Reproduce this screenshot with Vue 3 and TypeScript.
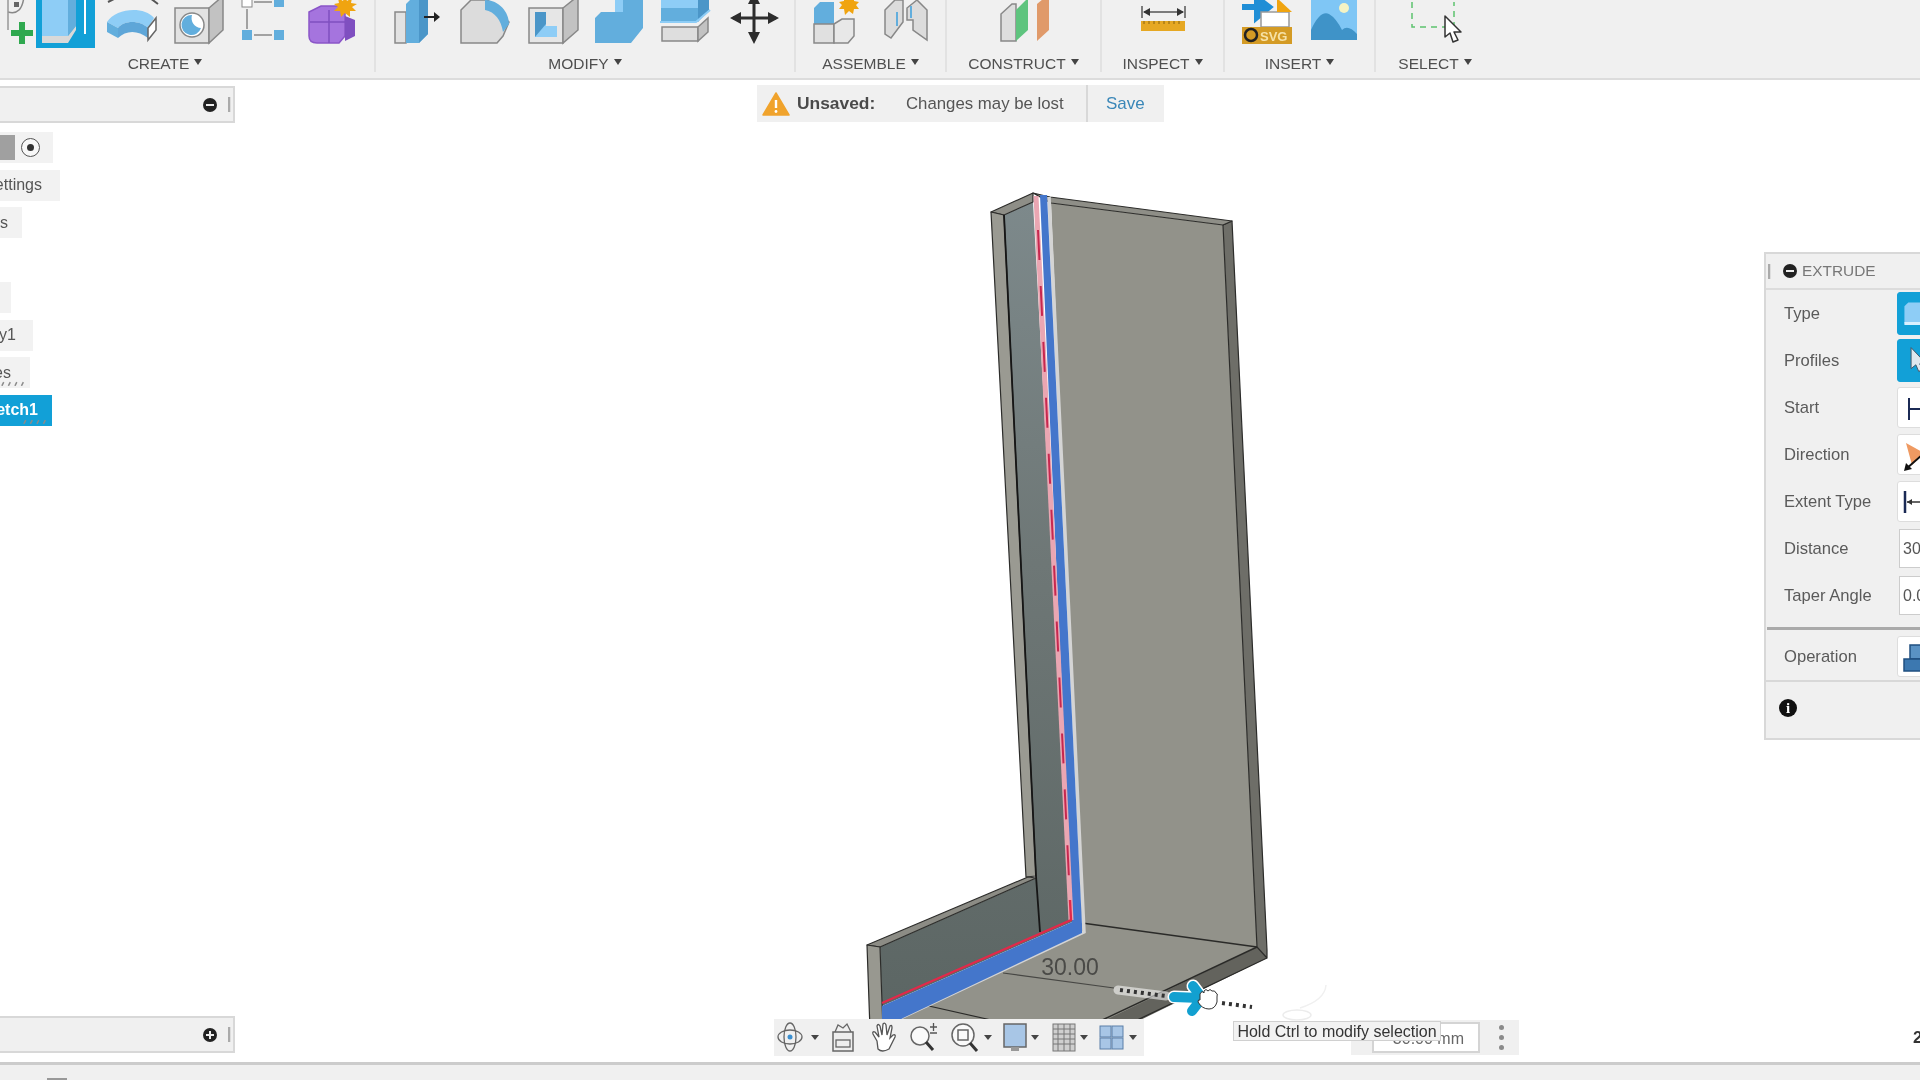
<script setup lang="ts">
// Fusion-style modelling workspace, extrude command open
interface TreeRow {
  label: string
  width: number
  pad: number
  active?: boolean
  blank?: boolean
  hatch?: boolean
}

const treeRows: TreeRow[] = [
  { label: 'Document Settings', width: 60, pad: 18 },
  { label: 'Named Views', width: 22, pad: 14 },
  { label: '', width: 0, pad: 0, blank: true },
  { label: '', width: 11, pad: 0 },
  { label: 'Body1', width: 33, pad: 17 },
  { label: 'Sketches', width: 30, pad: 19, hatch: true },
  { label: 'Sketch1', width: 52, pad: 14, active: true, hatch: true },
]

const extrudeRows = ['Type', 'Profiles', 'Start', 'Direction', 'Extent Type', 'Distance', 'Taper Angle']
</script>

<template>
  <div class="app">
    <header class="toolbar">
      <section class="group group-create">
        <div class="icons">
          <svg class="tool" viewBox="0 0 67 46">
            <path d="M44 12 Q58 16 60 -4" fill="none" stroke="#888" stroke-width="1.5" />
            <path d="M44 -2 L44 30" fill="none" stroke="#999" stroke-width="1.5" />
            <rect x="50" y="2" width="5" height="5" fill="#666" />
            <path d="M58 22 V44 M47 33 H69" stroke="#2fa84f" stroke-width="6" />
          </svg>
          <svg class="tool" viewBox="0 0 67 46">
            <rect x="5" y="0" width="59" height="48" fill="#12a0d7" />
            <path d="M11 0 H37 V36 H11 Z" fill="#8ecdf6" />
            <path d="M37 0 H45 V26 L37 36 Z" fill="#62aedd" />
            <path d="M11 36 H37 L45 26 V30 L37 43 H11 Z" fill="#d9d9d9" />
            <path d="M54 -2 V34" stroke="#fff" stroke-width="2" />
          </svg>
          <svg class="tool" viewBox="0 0 67 46">
            <path d="M9 22 C18 8 46 6 56 18 L50 28 C42 20 26 20 20 28 Z" fill="#8ecdf6" />
            <path d="M9 22 L20 28 V38 L9 32 Z" fill="#62aedd" />
            <path d="M20 28 C26 20 42 20 50 28 V38 C40 30 28 30 20 38 Z" fill="#5ea6d8" />
            <path d="M50 28 L58 18 V30 L50 40 Z" fill="#fff" stroke="#666" stroke-width="1.5" />
            <path d="M10 2 L18 -2 M52 -2 L60 4" stroke="#555" stroke-width="2" />
          </svg>
          <svg class="tool" viewBox="0 0 67 46">
            <path d="M10 8 H44 V43 H10 Z" fill="#e2e2e2" stroke="#888" stroke-width="1.5" />
            <path d="M44 8 L58 -4 V30 L44 43 Z" fill="#c2c2c2" stroke="#888" stroke-width="1.5" />
            <circle cx="27" cy="25" r="12" fill="#fff" stroke="#888" stroke-width="1.5" />
            <path d="M27 15 A10 10 0 1 0 36 28 A10 10 0 0 1 27 15 Z" fill="#62aedd" />
          </svg>
          <svg class="tool" viewBox="0 0 67 46">
            <rect x="10" y="-3" width="10" height="10" fill="#fff" stroke="#888" />
            <rect x="42" y="-3" width="10" height="10" fill="#62aedd" />
            <rect x="10" y="30" width="10" height="10" fill="#62aedd" />
            <rect x="42" y="30" width="10" height="10" fill="#62aedd" />
            <path d="M15 9 V29 M22 2 H40 M22 35 H40" stroke="#888" stroke-width="1.5" />
          </svg>
          <svg class="tool" viewBox="0 0 67 46">
            <path d="M10 12 L22 6 H46 V36 L40 43 H18 Q10 43 10 36 Z" fill="#a574de" stroke="#8a55c8" stroke-width="1.5" />
            <path d="M46 16 L56 20 V36 L46 41 Z" fill="#7f4fc0" />
            <path d="M11 22 H46 M30 10 V43" stroke="#7f4fc0" stroke-width="1.5" />
            <path d="M46 -4 L48 1 L53 -2 L52 3 L58 4 L53 7 L57 11 L51 11 L51 17 L46 13 L42 17 L41 11 L35 11 L39 7 L35 4 L40 3 L39 -2 L44 1 Z" fill="#f0a410" />
          </svg>
        </div>
        <div class="group-label">CREATE<i class="caret"></i></div>
      </section>

      <section class="group group-modify">
        <div class="icons">
          <svg class="tool" viewBox="0 0 67 46">
            <path d="M11 12 H22 V43 H11 Z" fill="#e2e2e2" stroke="#888" stroke-width="1.5" />
            <path d="M22 4 L30 -4 H44 V34 L35 43 H22 Z" fill="#62aedd" />
            <path d="M35 -4 V43 L44 34 V-4 Z" fill="#4b96c8" />
            <path d="M40 17 H54" stroke="#222" stroke-width="2" />
            <path d="M50 12 L56 17 L50 22 Z" fill="#222" />
          </svg>
          <svg class="tool" viewBox="0 0 67 46">
            <path d="M10 10 L20 0 H36 C48 6 52 18 58 22 L52 36 L46 43 H10 Z" fill="#dcdcdc" stroke="#888" stroke-width="1.5" />
            <path d="M34 0 C48 0 58 12 58 24 L52 32 C50 20 44 12 34 10 Z" fill="#62aedd" />
          </svg>
          <svg class="tool" viewBox="0 0 67 46">
            <path d="M11 8 H45 V43 H11 Z" fill="#e6e6e6" stroke="#888" stroke-width="1.5" />
            <path d="M45 8 L60 -4 V30 L45 43 Z" fill="#c2c2c2" stroke="#888" stroke-width="1.5" />
            <path d="M17 12 H28 V26 H39 V37 H17 Z" fill="#8ecdf6" />
            <path d="M17 12 H28 V24 L17 37 Z" fill="#4b96c8" />
          </svg>
          <svg class="tool" viewBox="0 0 67 46">
            <path d="M10 18 L16 12 H30 V-4 H58 V28 L46 43 H10 Z" fill="#62aedd" />
            <path d="M30 -4 L38 -4 V12 H30 Z" fill="#8ecdf6" />
          </svg>
          <svg class="tool" viewBox="0 0 67 46">
            <path d="M9 8 H46 V22 H9 Z" fill="#62aedd" />
            <path d="M46 -2 L57 -4 V10 L46 22 Z" fill="#4b96c8" />
            <path d="M9 -2 H46 V8 H9 Z" fill="#8ecdf6" />
            <path d="M8 22 H44 L58 10" fill="none" stroke="#8ecdf6" stroke-width="2" />
            <path d="M10 27 H46 V41 H10 Z" fill="#dedede" stroke="#888" stroke-width="1.5" />
            <path d="M46 27 L56 18 V32 L46 41 Z" fill="#c2c2c2" stroke="#888" stroke-width="1.5" />
          </svg>
          <svg class="tool" viewBox="0 0 67 46">
            <path d="M35 -2 V40 M14 18 H57" stroke="#2d2d2d" stroke-width="3" />
            <path d="M35 44 L29 32 H41 Z M35 -8 L29 4 H41 Z M11 18 L22 12 V24 Z M60 18 L49 12 V24 Z" fill="#2d2d2d" />
          </svg>
        </div>
        <div class="group-label">MODIFY<i class="caret"></i></div>
      </section>

      <section class="group group-assemble">
        <div class="icons">
          <svg class="tool" viewBox="0 0 67 46">
            <path d="M10 8 L16 2 H30 V24 H10 Z" fill="#62aedd" />
            <path d="M10 24 H30 V43 H10 Z" fill="#e0e0e0" stroke="#888" stroke-width="1.5" />
            <path d="M30 24 L38 19 H50 V36 L44 43 H30 Z" fill="#e8e8e8" stroke="#888" stroke-width="1.5" />
            <path d="M44 -3 L46 0 L50 -3 L50 1 L55 2 L52 5 L55 9 L50 9 L49 14 L45 11 L41 15 L40 9 L35 9 L38 5 L35 2 L40 1 L40 -3 Z" fill="#f0a410" />
          </svg>
          <svg class="tool" viewBox="0 0 67 46">
            <path d="M14 10 L24 0 H32 V22 L20 38 L14 34 Z" fill="#dcdcdc" stroke="#888" stroke-width="1.5" />
            <path d="M46 0 L56 10 V40 L42 30 V20 H36 V8 Z" fill="#dcdcdc" stroke="#888" stroke-width="1.5" />
            <path d="M26 12 V26 M40 6 V18" stroke="#62aedd" stroke-width="2" />
          </svg>
        </div>
        <div class="group-label">ASSEMBLE<i class="caret"></i></div>
      </section>

      <section class="group group-construct">
        <div class="icons">
          <svg class="tool" viewBox="0 0 67 46">
            <path d="M11 14 L22 4 H26 V41 H11 Z" fill="#dedede" stroke="#888" stroke-width="1.5" />
            <path d="M26 10 L38 -2 V30 L26 41 Z" fill="#5ec47e" />
            <path d="M47 4 L59 -6 V30 L47 41 Z" fill="#e09a6a" />
          </svg>
        </div>
        <div class="group-label">CONSTRUCT<i class="caret"></i></div>
      </section>

      <section class="group group-inspect">
        <div class="icons">
          <svg class="tool" viewBox="0 0 67 46">
            <path d="M13 6 V18 M56 6 V18" stroke="#555" stroke-width="1.5" />
            <path d="M15 12 H54" stroke="#555" stroke-width="1.5" />
            <path d="M14 12 L21 8 V16 Z M55 12 L48 8 V16 Z" fill="#333" />
            <rect x="12" y="21" width="44" height="10" fill="#e6a823" />
            <path d="M15 21 V24 M20 21 V24 M25 21 V24 M30 21 V24 M35 21 V24 M40 21 V24 M45 21 V24 M50 21 V24" stroke="#8a6510" />
          </svg>
        </div>
        <div class="group-label">INSPECT<i class="caret"></i></div>
      </section>

      <section class="group group-insert">
        <div class="icons">
          <svg class="tool" viewBox="0 0 67 46">
            <path d="M9 7 H24 M24 -2 L36 7 L24 17 Z" stroke="#1f8ed6" stroke-width="6" fill="#1f8ed6" />
            <path d="M28 12 H56 V27 H28 Z" fill="#fff" stroke="#999" stroke-width="1.5" />
            <path d="M44 -2 L59 12 H44 Z" fill="#f0a410" />
            <rect x="9" y="27" width="50" height="17" fill="#d49b25" />
            <circle cx="18" cy="35" r="6" fill="none" stroke="#222" stroke-width="2.5" />
            <text x="27" y="41" class="svg-badge">SVG</text>
          </svg>
          <svg class="tool" viewBox="0 0 67 46">
            <rect x="11" y="-4" width="46" height="44" fill="#7fc6f5" />
            <path d="M11 30 Q20 10 29 14 Q36 18 42 30 Q48 24 57 34 V40 H11 Z" fill="#3f93c8" />
            <circle cx="44" cy="8" r="5" fill="#f4f3c4" />
          </svg>
        </div>
        <div class="group-label">INSERT<i class="caret"></i></div>
      </section>

      <section class="group group-select">
        <div class="icons">
          <svg class="tool" viewBox="0 0 67 46">
            <path d="M10 2 V27 H52 V2" fill="none" stroke="#5cc26e" stroke-width="1.5" stroke-dasharray="6 5" />
            <path d="M43 16 L43 37 L48 33 L51 42 L56 40 L52 32 L59 32 Z" fill="#fff" stroke="#333" stroke-width="1.5" stroke-linejoin="round" />
          </svg>
        </div>
        <div class="group-label">SELECT<i class="caret"></i></div>
      </section>
    </header>

    <main class="workspace">
      <!-- model, in page coordinates -->
      <svg class="model" viewBox="0 80 1920 982">
        <defs>
          <linearGradient id="inner" x1="0" y1="0" x2="0" y2="1">
            <stop offset="0" stop-color="#7d898b" />
            <stop offset="0.45" stop-color="#6e7776" />
            <stop offset="1" stop-color="#5c6664" />
          </linearGradient>
        </defs>
        <!-- ghost of the sketch behind the tooltip -->
        <ellipse cx="1297" cy="1015" rx="14" ry="5" fill="none" stroke="#ececec" stroke-width="1.5" />
        <path d="M1300 1008 Q1325 1000 1326 985" fill="none" stroke="#f0f0f0" stroke-width="1.5" />

        <polygon points="1004,215 1033,202 1072,922 882,1006 880,947 1036,878" fill="url(#inner)" />
        <polygon points="1051,203 1223,225 1257,947 1082,923" fill="#92928a" />
        <polygon points="1082,923 1257,947 1098,1030 880,1030" fill="#92928a" />
        <polygon points="1257,947 1267,958 1120,1030 1085,1030" fill="#63635d" />
        <polygon points="1223,225 1232,221 1267,950 1267,958 1257,947" fill="#6e6e68" stroke="#2c2c2a" stroke-width="1.2" stroke-linejoin="round" />
        <polygon points="1033,193 1050,197 1232,221 1223,225 1051,203" fill="#8e8e87" stroke="#2c2c2a" stroke-width="1.2" stroke-linejoin="round" />
        <polygon points="991,212 1033,193 1033,202 1004,215" fill="#8e8e87" stroke="#2c2c2a" stroke-width="1.2" stroke-linejoin="round" />
        <polygon points="991,212 1004,215 1036,876 1026,877" fill="#9a9a92" stroke="#2c2c2a" stroke-width="1.2" stroke-linejoin="round" />
        <polygon points="867,945 1028,877 1036,878 880,947" fill="#8c8c85" stroke="#2c2c2a" stroke-width="1.2" stroke-linejoin="round" />
        <polygon points="867,945 880,947 883,1030 870,1030" fill="#989890" stroke="#2c2c2a" stroke-width="1.2" stroke-linejoin="round" />
        <path d="M1004 215 L1036 876 L1040 932" fill="none" stroke="#161616" stroke-width="1.8" />
        <path d="M1082 923 L1257 947" stroke="#2a2a28" stroke-width="1.4" />
        <path d="M1257 947 L1098 1022" stroke="#2a2a28" stroke-width="1.4" />
        <path d="M1267 958 L1133 1022" stroke="#2a2a28" stroke-width="1.2" />
        <path d="M920 1004 L1000 1022" stroke="#2a2a28" stroke-width="1.2" />

        <!-- selected profile -->
        <path d="M1049 197 L1084 932 L892 1022" fill="none" stroke="#d4d4d4" stroke-width="3.5" />
        <polygon points="1040,195 1047,195 1082,925 1082,933 903,1018 882,1030 882,1006 1072,922" fill="#4476cb" />
        <path d="M1036 196 L1071 920" stroke="#eaa6b2" stroke-width="5" />
        <path d="M1038 230 L1070 900" fill="none" stroke="#c8274f" stroke-width="2" stroke-dasharray="30 26" />
        <path d="M1070 900 L1071 920 L882 1003" fill="none" stroke="#e2294a" stroke-width="2.4" />

        <path d="M1003 973 L1114 988" stroke="#474744" stroke-width="1.2" />
        <path d="M1118 990 L1166 996 M1218 1002 L1254 1007" stroke="#fff" stroke-opacity="0.55" stroke-width="9" stroke-linecap="round" />
        <path d="M1120 990 L1166 996 M1222 1003 L1252 1007" stroke="#333" stroke-width="4" stroke-dasharray="3 4" />
        <text x="1070" y="975" class="dim-text">30.00</text>

        <!-- drag handle + hand cursor -->
        <path d="M1174 997 L1200 998 M1193 986 L1202 998 L1192 1011" fill="none" stroke="#fff" stroke-width="13" stroke-linecap="round" stroke-linejoin="round" />
        <path d="M1174 997 L1200 998 M1193 986 L1202 998 L1192 1011" fill="none" stroke="#12a0d0" stroke-width="10" stroke-linecap="round" stroke-linejoin="round" />
        <path d="M1200 1000 V994 Q1202 990 1204 993 V991 Q1206 988 1208 991 Q1210 988 1212 991 Q1215 990 1216 993 Q1218 993 1217 997 V1002 Q1215 1009 1209 1009 Q1202 1009 1198 1002 Q1198 999 1200 1000 Z" fill="#fff" stroke="#333" stroke-width="1" />
      </svg>

      <!-- browser panel, mostly scrolled off the left -->
      <div class="browser-head">
        <i class="round-btn minus"></i>
        <i class="handle"></i>
      </div>
      <div class="tree">
        <div class="tree-row radio-row">
          <i class="swatch"></i>
          <i class="radio"></i>
        </div>
        <div
          v-for="row in treeRows"
          :key="row.label + row.width"
          class="tree-row"
          :class="{ active: row.active, blank: row.blank }"
          :style="{ width: row.width + 'px', paddingRight: row.pad + 'px' }"
        >
          <span>{{ row.label }}</span>
          <svg v-if="row.hatch" class="hatch" viewBox="0 0 30 5">
            <path d="M2 5 L4 1 M9 5 L11 1 M16 5 L18 1 M23 5 L25 1" stroke="#8b8b8b" stroke-width="1.6" />
          </svg>
        </div>
      </div>
      <div class="browser-foot">
        <i class="round-btn plus"></i>
        <i class="handle"></i>
      </div>

      <!-- unsaved banner -->
      <div class="unsaved">
        <svg class="warn" viewBox="0 0 28 24">
          <path d="M14 1 L27 23 H1 Z" fill="#f0a32c" stroke="#f0a32c" stroke-width="1.5" stroke-linejoin="round" />
          <path d="M14 8 V16" stroke="#fff" stroke-width="2.4" />
          <circle cx="14" cy="19.5" r="1.4" fill="#fff" />
        </svg>
        <b>Unsaved:</b>
        <span class="lost">Changes may be lost</span>
        <a class="save">Save</a>
      </div>

      <!-- extrude palette -->
      <aside class="extrude">
        <div class="extrude-head">
          <i class="handle"></i>
          <i class="round-btn minus"></i>
          <span>EXTRUDE</span>
        </div>
        <div v-for="(row, i) in extrudeRows" :key="row" class="extrude-row">
          <label>{{ row }}</label>
          <div v-if="i === 0" class="ctl blue">
            <svg viewBox="0 0 30 43"><path d="M6 14 L10 10 H24 V32 H6 Z" fill="#8ecdf6" /><path d="M6 32 H24" stroke="#d9f0ff" stroke-width="3" /></svg>
          </div>
          <div v-else-if="i === 1" class="ctl blue">
            <svg viewBox="0 0 30 43"><path d="M13 8 V30 L18 26 L21 33 L25 31 L22 25 H29 Z" fill="#dfe8ee" stroke="#456" stroke-width="1" /></svg>
          </div>
          <div v-else-if="i === 2" class="ctl">
            <svg viewBox="0 0 30 41"><path d="M11 10 V32 M11 21 H24" fill="none" stroke="#1b2a55" stroke-width="2" /></svg>
          </div>
          <div v-else-if="i === 3" class="ctl">
            <svg viewBox="0 0 30 41"><path d="M8 8 L26 18 L14 30 Z" fill="#ef9a62" /><path d="M8 34 L24 20" stroke="#111" stroke-width="2" /><path d="M6 36 L8 28 L14 34 Z" fill="#111" /></svg>
          </div>
          <div v-else-if="i === 4" class="ctl">
            <svg viewBox="0 0 30 41"><path d="M7 9 V31" stroke="#1b2a55" stroke-width="2.5" /><path d="M9 20 H28" stroke="#333" stroke-width="1.5" /><path d="M9 20 L14 17 V23 Z" fill="#333" /></svg>
          </div>
          <div v-else class="ctl input">{{ i === 5 ? '30.00 mm' : '0.0 deg' }}</div>
        </div>
        <hr class="heavy" />
        <div class="extrude-row">
          <label>Operation</label>
          <div class="ctl">
            <svg viewBox="0 0 30 41"><path d="M12 8 H30 V22 H12 Z" fill="#5a92c4" stroke="#1f4f80" stroke-width="1.5" /><path d="M6 22 H30 V34 H6 Z" fill="#3c78b0" stroke="#1f4f80" stroke-width="1.5" /></svg>
          </div>
        </div>
        <div class="extrude-foot"><i class="info">i</i></div>
      </aside>

      <!-- navigation bar -->
      <nav class="navbar">
        <svg style="width: 51px" viewBox="0 0 51 37">
          <ellipse cx="16" cy="18" rx="12" ry="7" fill="none" stroke="#666" stroke-width="1.3" />
          <ellipse cx="16" cy="18" rx="6" ry="14" fill="none" stroke="#666" stroke-width="1.3" />
          <circle cx="16" cy="18" r="2.5" fill="#3b8fd0" />
          <path d="M37 16 H45 L41 21 Z" fill="#444" />
        </svg>
        <svg style="width: 37px" viewBox="0 0 37 37">
          <rect x="8" y="13" width="20" height="19" fill="#eee" stroke="#666" stroke-width="1.5" />
          <rect x="11" y="21" width="14" height="7" fill="none" stroke="#666" stroke-width="1.3" />
          <path d="M10 13 L13 6 L18 9 L22 5 L26 13" fill="none" stroke="#666" stroke-width="1.3" />
        </svg>
        <svg style="width: 41px" viewBox="0 0 41 37">
          <path d="M15 22 L11 15 Q10 12 13 13 L17 18 L15 7 Q16 4 18 7 L20 16 L21 5 Q23 3 24 6 L25 16 L28 7 Q30 5 30 9 L28 19 L31 16 Q34 15 33 18 L27 30 Q20 34 16 30 Z" fill="#fff" stroke="#555" stroke-width="1.3" />
        </svg>
        <svg style="width: 40px" viewBox="0 0 40 37">
          <circle cx="17" cy="17" r="9" fill="#fafafa" stroke="#666" stroke-width="1.5" />
          <path d="M23 23 L30 31" stroke="#333" stroke-width="3" />
          <path d="M27 8 H34 M30.5 4 V12 M27 14 H34" stroke="#555" stroke-width="1.3" />
        </svg>
        <svg style="width: 57px" viewBox="0 0 57 37">
          <circle cx="20" cy="16" r="11" fill="#fafafa" stroke="#666" stroke-width="1.5" />
          <rect x="15" y="11" width="10" height="10" fill="none" stroke="#666" stroke-width="1.5" />
          <path d="M27 24 L34 32" stroke="#333" stroke-width="3" />
          <path d="M41 16 H49 L45 21 Z" fill="#444" />
        </svg>
        <svg style="width: 50px" viewBox="0 0 50 37">
          <rect x="4" y="5" width="22" height="23" fill="#a8c6e6" stroke="#666" stroke-width="1.5" />
          <rect x="11" y="28" width="8" height="4" fill="#999" />
          <path d="M31 16 H39 L35 21 Z" fill="#444" />
        </svg>
        <svg style="width: 48px" viewBox="0 0 48 37">
          <rect x="3" y="5" width="22" height="27" fill="#cfcfcf" stroke="#777" />
          <path d="M3 10 H25 M3 15 H25 M3 20 H25 M3 25 H25 M8 5 V32 M14 5 V32 M20 5 V32" stroke="#777" />
          <path d="M30 16 H38 L34 21 Z" fill="#444" />
        </svg>
        <svg style="width: 46px" viewBox="0 0 46 37">
          <rect x="2" y="7" width="11" height="11" fill="#a8c6e6" stroke="#5a7fa8" />
          <rect x="14" y="7" width="11" height="11" fill="#a8c6e6" stroke="#5a7fa8" />
          <rect x="2" y="19" width="11" height="11" fill="#a8c6e6" stroke="#5a7fa8" />
          <rect x="14" y="19" width="11" height="11" fill="#a8c6e6" stroke="#5a7fa8" />
          <path d="M31 16 H39 L35 21 Z" fill="#444" />
        </svg>
      </nav>

      <!-- distance entry + tooltip -->
      <div class="dist-box">
        <div class="dist-input">30.00 mm</div>
        <div class="dots"><i></i><i></i><i></i></div>
      </div>
      <div class="tip">Hold Ctrl to modify selection</div>
      <div class="corner-num">2</div>
    </main>

    <footer class="bottom-bar"><i class="tl-tick"></i></footer>
  </div>
</template>

<style>
html, body { margin: 0; background: #fff; }
</style>

<style scoped>
.app {
  width: 1920px; height: 1080px; overflow: hidden;
  display: flex; flex-direction: column;
  background: #fff; color: #555;
  font-family: "Liberation Sans", Arial, sans-serif; font-size: 16px;
  filter: blur(0.7px);
}
i { display: block; font-style: normal; }

/* toolbar */
.toolbar {
  flex: none; height: 78px; display: flex;
  background: #f0f0f0; border-bottom: 2px solid #dcdcdc;
  overflow: hidden;
}
.group {
  flex: none; height: 72px; box-sizing: border-box;
  border-right: 2px solid #e2e2e2;
  display: flex; flex-direction: column; align-items: center;
}
.group-create { width: 420px; margin-left: -44px; }
.group-modify { width: 420px; }
.group-assemble { width: 151px; }
.group-construct { width: 155px; }
.group-inspect { width: 123px; }
.group-insert { width: 151px; }
.group-select { width: 118px; border-right: none; }
.icons { height: 46px; display: flex; justify-content: center; flex: none; }
.tool { width: 67px; height: 46px; overflow: visible; flex: none; }
.group-label {
  margin-top: 9px; line-height: 17px; font-size: 15.5px; color: #4f4f4f;
  display: flex; align-items: center; gap: 5px;
}
.caret {
  width: 0; height: 0; margin-top: -3px;
  border-left: 4.5px solid transparent; border-right: 4.5px solid transparent;
  border-top: 6px solid #444;
}
.svg-badge { font: bold 13px "Liberation Sans", sans-serif; fill: #f6e2a8; }

/* canvas */
.workspace { flex: 1; position: relative; }
.model { position: absolute; left: 0; top: 0; width: 1920px; height: 982px; }
.dim-text { font: 23px "Liberation Sans", sans-serif; fill: #4a4a47; text-anchor: middle; }

.browser-head, .browser-foot {
  position: absolute; left: 0; width: 235px; height: 37px; box-sizing: border-box;
  background: #f0f0f0; border: 2px solid #d8d8d8; border-left: none;
  display: flex; align-items: center; justify-content: flex-end; gap: 11px; padding-right: 2px;
}
.browser-head { top: 6px; }
.browser-foot { top: 936px; }
.handle { width: 2px; height: 15px; background: #aaa; border-right: 1px solid #ddd; }
.round-btn { width: 14px; height: 14px; border-radius: 50%; background: #222; position: relative; flex: none; }
.round-btn::before { content: ""; position: absolute; left: 3px; right: 3px; top: 6px; height: 2px; background: #eee; }
.round-btn.plus::after { content: ""; position: absolute; top: 3px; bottom: 3px; left: 6px; width: 2px; background: #eee; }

.tree {
  position: absolute; left: 0; top: 52px;
  display: flex; flex-direction: column; align-items: flex-start; gap: 6.5px;
}
.tree-row {
  height: 31px; box-sizing: border-box; background: #f2f2f2;
  display: flex; align-items: center; justify-content: flex-end;
  white-space: nowrap; position: relative; color: #555;
}
.tree-row span { flex: none; }
.tree-row.blank { background: none; }
.tree-row.active { background: #12a0d7; color: #fff; font-weight: 700; }
.radio-row { width: 53px; justify-content: flex-start; gap: 5px; }
.swatch { width: 15px; height: 25px; background: #a0a0a0; }
.radio { width: 17px; height: 17px; border: 1.5px solid #555; border-radius: 50%; position: relative; background: #f8f8f8; margin-left: 1px; }
.radio::after { content: ""; position: absolute; left: 5px; top: 5px; width: 7px; height: 7px; border-radius: 50%; background: #333; }
.hatch { position: absolute; right: 2px; bottom: 2px; width: 28px; height: 5px; }

.unsaved {
  position: absolute; left: 757px; top: 5px; width: 407px; height: 37px;
  background: #f0f0f0; display: flex; align-items: center; white-space: nowrap;
}
.warn { width: 28px; height: 24px; margin-left: 5px; flex: none; }
.unsaved b { margin-left: 7px; font-size: 17.4px; color: #4a4a4a; width: 109px; }
.lost { font-size: 16.8px; color: #555; width: 180px; height: 37px; line-height: 37px; border-right: 2px solid #d8d8d8; }
.save { margin-left: 18px; color: #3a87b8; font-size: 17px; }

/* extrude palette */
.extrude {
  position: absolute; left: 1764px; top: 172px; width: 300px; height: 488px; box-sizing: border-box;
  background: #f0f0f0; border: 2px solid #d8d8d8;
}
.extrude-head {
  height: 36px; box-sizing: border-box; border-bottom: 2px solid #dcdcdc;
  display: flex; align-items: center; padding-left: 2px; color: #777; font-size: 15.4px;
}
.extrude-head .round-btn { margin-left: 12px; }
.extrude-head span { margin-left: 5px; }
.extrude-row { height: 47px; display: flex; align-items: center; padding-left: 18px; }
.extrude-row label { width: 113px; flex: none; color: #5a5a5a; font-size: 16.6px; white-space: nowrap; }
.ctl {
  width: 60px; height: 41px; box-sizing: border-box; background: #fff; border: 1px solid #ddd; border-radius: 3px;
  overflow: hidden; flex: none;
}
.ctl svg { display: block; width: 30px; height: 41px; }
.ctl.blue { background: #12a0d7; border-color: #12a0d7; height: 43px; }
.ctl.input { margin-left: 2px; height: 39px; line-height: 37px; padding-left: 3px; color: #555; white-space: nowrap; border-radius: 0; border-color: #ccc; }
.heavy { margin: 8px 0 0 1px; border: none; height: 3px; background: #aaa; }
.extrude-row:has(+ .extrude-foot) { margin-top: 3px; }
.extrude-foot {
  height: 54px; border-top: 2px solid #d8d8d8; box-sizing: border-box;
  display: flex; align-items: center; padding-left: 13px;
}
.info {
  width: 18px; height: 18px; border-radius: 50%; background: #111; color: #fff;
  font: bold 15px/18px "Liberation Serif", serif; text-align: center;
}

/* nav bar */
.navbar {
  position: absolute; left: 774px; top: 939px; width: 370px; height: 37px;
  background: #f0f0f0; display: flex;
}
.navbar svg { height: 37px; flex: none; }
.dist-box {
  position: absolute; left: 1351px; top: 940px; width: 168px; height: 35px;
  background: #f0f0f0; display: flex; align-items: center;
}
.dist-input {
  margin-left: 21px; width: 108px; height: 31px; box-sizing: border-box; background: #fff; border: 2px solid #d4d4d4;
  line-height: 29px; text-align: right; padding-right: 14px; font-size: 16px; color: #666; white-space: nowrap;
}
.dots { margin-left: 19px; display: flex; flex-direction: column; gap: 5px; }
.dots i { width: 5px; height: 5px; border-radius: 50%; background: #8a8a8a; }
.tip {
  position: absolute; left: 1233px; top: 941px; width: 208px; height: 20px; box-sizing: border-box;
  background: #f2f2f2; border: 1px solid #d0d0d0; text-align: center; line-height: 20px; color: #333; white-space: nowrap;
}
.corner-num { position: absolute; left: 1913px; top: 948px; font-weight: 700; color: #333; font-size: 17px; }

.bottom-bar { flex: none; height: 18px; box-sizing: border-box; background: #f0f0f0; border-top: 3px solid #ccc; position: relative; }
.tl-tick { position: absolute; left: 47px; bottom: 0; width: 20px; height: 2px; background: #999; }
</style>
